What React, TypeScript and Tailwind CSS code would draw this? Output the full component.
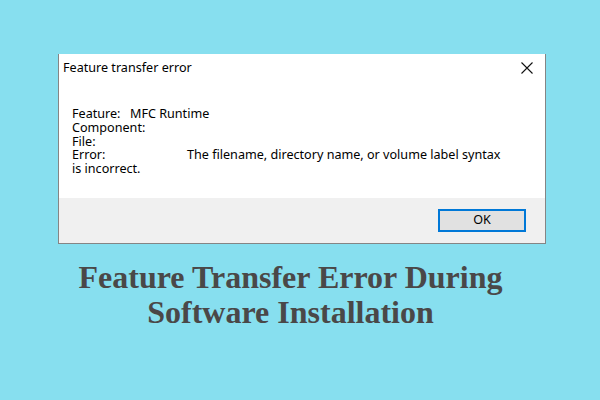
import React from "react";

const App: React.FC = () => {
  return (
    <div className="w-[600px] h-[400px] bg-[#87dfef] pt-[54px] flex flex-col overflow-hidden">
      {/* Dialog window */}
      <div className="ml-[58px] w-[488px] h-[190px] bg-white border-l border-r border-b border-[#858585] flex flex-col font-['Noto_Sans',sans-serif] text-[12.6px] text-black">
        <div className="h-[28px] pl-[4px] pr-[12px] flex items-center justify-between">
          <span>Feature transfer error</span>
          <svg width="12" height="12" viewBox="0 0 12 12" className="text-[#111]">
            <path d="M0.5 0.5L11.5 11.5M11.5 0.5L0.5 11.5" stroke="currentColor" strokeWidth="1.1" />
          </svg>
        </div>

        <div className="pl-[13px] pt-[25px] leading-[13.75px]">
          <div>
            <span className="inline-block w-[58px]">Feature:</span>MFC Runtime
          </div>
          <div>Component:</div>
          <div>File:</div>
          <div>
            <span className="inline-block w-[115px]">Error:</span>The filename, directory name, or volume label syntax
            <br />
            is incorrect.
          </div>
        </div>

        <div className="mt-auto h-[45px] bg-[#f0f0f0] flex items-center justify-end pr-[19px]">
          <button className="w-[88px] h-[23px] border-2 border-[#0078d7] bg-[#e1e1e1] text-[12.6px] leading-none">
            OK
          </button>
        </div>
      </div>

      <h1 className="mt-[16px] pr-[19px] text-center font-['Liberation_Serif',serif] font-bold text-[32px] leading-[35px] text-[#4a4848]">
        Feature Transfer Error During
        <br />
        Software Installation
      </h1>
    </div>
  );
};

export default App;
